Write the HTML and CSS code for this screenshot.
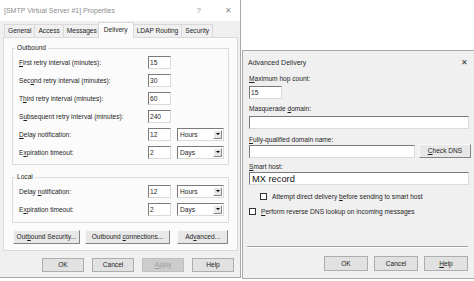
FILE: index.html
```html
<!DOCTYPE html>
<html lang="en">
<head>
  <meta charset="UTF-8" />
  <title>SMTP Virtual Server - Delivery</title>
  <link rel="stylesheet" href="styles.css">
</head>
<body>
  <div class="screen">
    <div class="props">
      <div class="titlebar">
        <span class="title">[SMTP Virtual Server #1] Properties</span>
        <span class="help-q">?</span>
        <span class="close">✕</span>
      </div>

      <div class="tabs">
        <div class="tab">General</div>
        <div class="tab">Access</div>
        <div class="tab">Messages</div>
        <div class="tab active">Delivery</div>
        <div class="tab">LDAP Routing</div>
        <div class="tab">Security</div>
      </div>

      <div class="panel">
        <fieldset class="group outbound">
          <legend>Outbound</legend>
          <div class="row"><label><u>F</u>irst retry interval (minutes):</label><div class="input">15</div></div>
          <div class="row"><label>Sec<u>o</u>nd retry interval (minutes):</label><div class="input">30</div></div>
          <div class="row"><label>T<u>h</u>ird retry interval (minutes):</label><div class="input">60</div></div>
          <div class="row"><label>S<u>u</u>bsequent retry interval (minutes):</label><div class="input">240</div></div>
          <div class="row"><label><u>D</u>elay notification:</label><div class="input">12</div><div class="select">Hours<span class="arrow"></span></div></div>
          <div class="row"><label>E<u>x</u>piration timeout:</label><div class="input">2</div><div class="select">Days<span class="arrow"></span></div></div>
        </fieldset>

        <fieldset class="group local">
          <legend>Local</legend>
          <div class="row"><label>Delay <u>n</u>otification:</label><div class="input">12</div><div class="select">Hours<span class="arrow"></span></div></div>
          <div class="row"><label>E<u>x</u>piration timeout:</label><div class="input">2</div><div class="select">Days<span class="arrow"></span></div></div>
        </fieldset>

        <div class="actions">
          <button class="btn w-sec">Out<u>b</u>ound Security...</button>
          <button class="btn w-conn">Outbound <u>c</u>onnections...</button>
          <button class="btn w-adv">Ad<u>v</u>anced...</button>
        </div>
      </div>

      <div class="footer">
        <button class="btn flat">OK</button>
        <button class="btn flat">Cancel</button>
        <button class="btn flat disabled"><u>A</u>pply</button>
        <button class="btn flat">Help</button>
      </div>
    </div>

    <div class="side">
      <div class="spacer"></div>
      <div class="adv">
        <div class="adv-title">
          <span>Advanced Delivery</span>
          <span class="adv-close">✕</span>
        </div>
        <div class="adv-body">
          <div class="field-label"><u>M</u>aximum hop count:</div>
          <div class="input hop">15</div>

          <div class="field-label">Masquerade <u>d</u>omain:</div>
          <div class="input wide"></div>

          <div class="field-label"><u>F</u>ully-qualified domain name:</div>
          <div class="fqdn">
            <div class="input fq"></div>
            <button class="btn check"><u>C</u>heck DNS</button>
          </div>

          <div class="field-label"><u>S</u>mart host:</div>
          <div class="input wide smart">MX record</div>

          <div class="check-row indent"><span class="box"></span><span>Attempt direct delivery <u>b</u>efore sending to smart host</span></div>
          <div class="check-row"><span class="box"></span><span><u>P</u>erform reverse DNS lookup on incoming messages</span></div>

          <div class="separator"></div>

          <div class="adv-footer">
            <button class="btn flat adv-btn">OK</button>
            <button class="btn flat adv-btn">Cancel</button>
            <button class="btn flat adv-btn"><u>H</u>elp</button>
          </div>
        </div>
      </div>
    </div>
  </div>
</body>
</html>
```

FILE: styles.css
```css
body {
  margin: 0;
  padding: 0;
  background: #ffffff;
  font-family: 'Liberation Sans', Arial, sans-serif;
  font-size: 6.6px;
  color: #1e1e1e;
}
.screen {
  display: flex;
  width: 474px;
  height: 281px;
  overflow: hidden;
  background: #ffffff;
}

/* left property sheet */
.props {
  width: 240px;
  height: 277px;
  background: #f0f0f0;
  border-right: 1px solid #a8a8a8;
  border-bottom: 1px solid #a8a8a8;
  display: flex;
  flex-direction: column;
}
.titlebar {
  height: 21px;
  background: #ffffff;
  display: flex;
  align-items: center;
  padding-left: 4px;
  color: #8c8c8c;
}
.title {
  font-size: 7px;
  flex: 1;
}
.help-q {
  font-size: 8px;
  margin-right: 24px;
  color: #8c8c8c;
}
.close {
  font-size: 8px;
  margin-right: 8px;
  color: #8c8c8c;
}
.tabs {
  display: flex;
  align-items: flex-end;
  height: 16px;
  padding-left: 4px;
}
.tab {
  height: 12px;
  line-height: 12px;
  padding: 0 3px;
  border: 1px solid #d9d9d9;
  border-bottom: none;
  margin-right: -1px;
  background: #f0f0f0;
}
.tab.active {
  height: 15px;
  line-height: 14px;
  padding: 0 5px;
  margin: 0 -1px -1px -2px;
  background: #fbfbfb;
  position: relative;
  z-index: 1;
}
.panel {
  margin: 0 2px 0 3px;
  height: 212px;
  border: 1px solid #d9d9d9;
  background: #fbfbfb;
  padding: 0 9px 0 8px;
}

/* group boxes */
.group {
  margin: 6px 0 0 0;
  padding: 1px 0 3px 6px;
  border: 1px solid #dcdcdc;
  width: 209px;
}
.group.local {
  margin-top: 8px;
  padding-bottom: 4px;
}
.group legend {
  padding: 0 2px;
  margin-left: -4px;
  line-height: 8px;
}
.row {
  display: flex;
  align-items: center;
  height: 18px;
}
.row label {
  width: 129px;
}
.input {
  background: #ffffff;
  border: 1px solid;
  border-color: #7a7a7a #dadada #dadada #7a7a7a;
  height: 11px;
  line-height: 11px;
  width: 20px;
  padding-left: 1px;
  box-sizing: content-box;
}
.select {
  margin-left: 6px;
  width: 43px;
  height: 11px;
  line-height: 11px;
  padding-left: 2px;
  background: #ffffff;
  border: 1px solid;
  border-color: #7a7a7a #dadada #dadada #7a7a7a;
  display: flex;
  justify-content: space-between;
  align-items: center;
}
.arrow {
  width: 9px;
  height: 9px;
  margin-right: 1px;
  background: #e6e6e6;
  border: 1px solid;
  border-color: #ffffff #8a8a8a #8a8a8a #ffffff;
  box-sizing: border-box;
  display: flex;
  align-items: center;
  justify-content: center;
}
.arrow::after {
  content: "";
  border-left: 2px solid transparent;
  border-right: 2px solid transparent;
  border-top: 2px solid #000000;
}

/* buttons */
.btn {
  font-family: inherit;
  font-size: 6.6px;
  color: #1e1e1e;
  height: 14px;
  padding: 0;
  background: #e8e8e8;
  border: 1px solid;
  border-color: #f8f8f8 #858585 #858585 #f8f8f8;
  box-sizing: border-box;
  line-height: 12px;
}
.btn.flat {
  background: #e1e1e1;
  border-color: #adadad;
  width: 42px;
  height: 14px;
}
.btn.disabled {
  background: #cccccc;
  border-color: #bfbfbf;
  color: #9d9d9d;
}
.actions {
  display: flex;
  margin-top: 7px;
}
.w-sec {
  width: 67px;
  margin-left: 1px;
}
.w-conn {
  width: 86px;
  margin-left: 5px;
}
.w-adv {
  width: 51px;
  margin-left: 7px;
}
.footer {
  display: flex;
  justify-content: flex-end;
  gap: 8px;
  padding: 7px 6px 0 0;
}

/* advanced delivery dialog */
.side {
  display: flex;
  flex-direction: column;
  margin-left: 1px;
  flex: 1;
}
.spacer {
  height: 50px;
}
.adv {
  height: 227px;
  background: #f0f0f0;
  border: 1px solid #a8a8a8;
  border-right: none;
}
.adv-title {
  height: 22px;
  display: flex;
  align-items: center;
  justify-content: space-between;
  padding: 0 6px 0 5px;
  font-size: 7px;
  color: #2a2a2a;
}
.adv-close {
  font-size: 8px;
  color: #333333;
}
.adv-body {
  padding: 0 0 0 6px;
}
.field-label {
  height: 8px;
  line-height: 8px;
  margin-top: 2px;
}
.input.hop {
  width: 30px;
  margin: 3px 0 6px;
}
.input.wide {
  width: 217px;
  margin: 3px 0 7px;
}
.fqdn {
  display: flex;
  align-items: center;
  margin: 0 0 5px;
}
.input.fq {
  width: 163px;
}
.btn.check {
  width: 52px;
  margin-left: 4px;
}
.input.smart {
  height: 11px;
  line-height: 12px;
  font-size: 9.3px;
  color: #111111;
  padding-left: 2px;
  width: 216px;
  margin: 1px 0 6px;
}
.check-row {
  display: flex;
  align-items: center;
  height: 10px;
  margin-bottom: 5px;
}
.check-row.indent {
  padding-left: 11px;
}
.box {
  width: 5px;
  height: 5px;
  background: #ffffff;
  border: 1px solid #333333;
  margin-right: 5px;
}
.separator {
  width: 221px;
  margin: 30px 0 0 -2px;
  border-top: 1px solid #a0a0a0;
  border-bottom: 1px solid #ffffff;
}
.adv-footer {
  display: flex;
  gap: 6px;
  padding: 8px 0 0 75px;
}
.btn.adv-btn {
  width: 44px;
  height: 15px;
}
```
